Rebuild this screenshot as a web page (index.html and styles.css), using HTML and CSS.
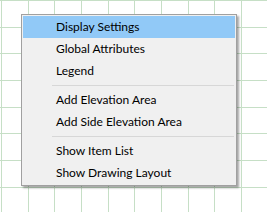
FILE: index.html
```html
<!DOCTYPE html>
<html>
<head>
<meta charset="utf-8">
<link rel="stylesheet" href="styles.css">
</head>
<body>
<div class="canvas">
  <div class="menu">
    <div class="item active">Display Settings</div>
    <div class="item">Global Attributes</div>
    <div class="item">Legend</div>
    <div class="sep"></div>
    <div class="item">Add Elevation Area</div>
    <div class="item">Add Side Elevation Area</div>
    <div class="sep"></div>
    <div class="item">Show Item List</div>
    <div class="item">Show Drawing Layout</div>
  </div>
</div>
</body>
</html>
```
FILE: styles.css
```css
html, body {
  margin: 0;
  padding: 0;
}
.canvas {
  position: relative;
  width: 267px;
  height: 212px;
  background-color: #ffffff;
  background-image:
    repeating-linear-gradient(to right, #c6dfc6 0 1px, transparent 1px 26.6667px),
    repeating-linear-gradient(to bottom, #c6dfc6 0 1px, transparent 1px 26.6667px);
  background-position: 1px 0, 0 0;
  overflow: hidden;
}
.menu {
  position: absolute;
  left: 21px;
  top: 14px;
  width: 212px;
  padding: 1px;
  background: #f0f0f0;
  border: 1px solid #a0a0a0;
  box-shadow: 2px 2px 2px rgba(0, 0, 0, 0.35);
  font-family: Lato, "Noto Sans", sans-serif;
  font-size: 12px;
  color: #000;
}
.item {
  height: 22px;
  line-height: 22px;
  padding-left: 33px;
  white-space: nowrap;
}
.item.active {
  background: #91c9f7;
}
.sep {
  height: 1px;
  margin: 3px 1px 3px 29px;
  background: #d7d7d7;
}
```
